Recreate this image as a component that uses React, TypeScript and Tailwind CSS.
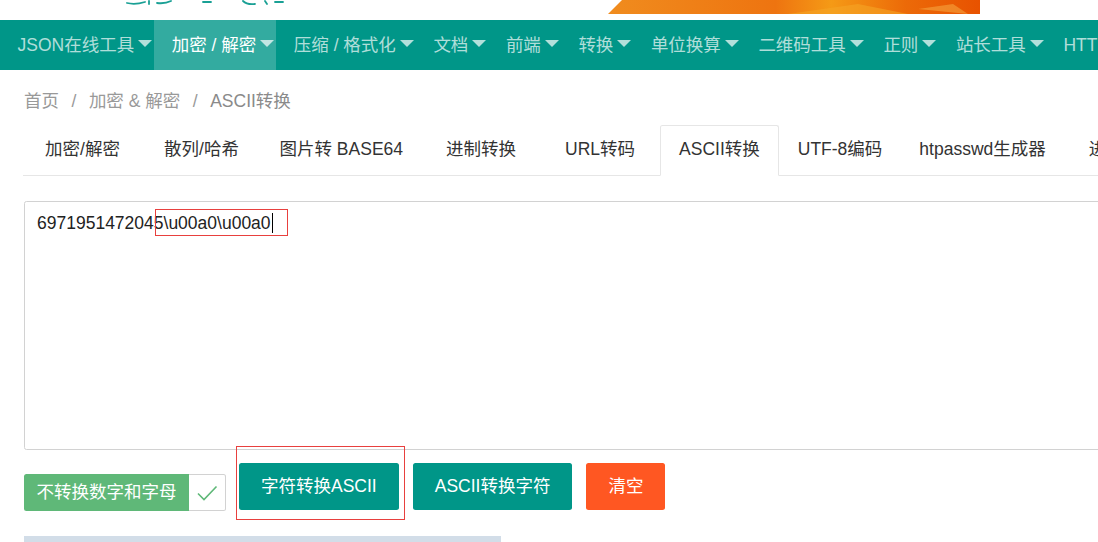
import React from "react";

const navItems = [
  "JSON在线工具",
  "加密 / 解密",
  "压缩 / 格式化",
  "文档",
  "前端",
  "转换",
  "单位换算",
  "二维码工具",
  "正则",
  "站长工具",
  "HTTP工具",
];

const tabs = [
  "加密/解密",
  "散列/哈希",
  "图片转 BASE64",
  "进制转换",
  "URL转码",
  "ASCII转换",
  "UTF-8编码",
  "htpasswd生成器",
  "进制转换",
];

function Caret() {
  return (
    <span className="ml-[4px] h-0 w-0 -mt-[3px] border-x-[7.5px] border-t-[7.5px] border-b-0 border-x-transparent border-t-[rgba(255,255,255,0.7)]" />
  );
}

export default function App() {
  return (
    <div
      className="w-[1098px] h-[542px] overflow-hidden bg-white text-[17.5px] text-[#333]"
      style={{ fontFamily: '"Liberation Sans", "Noto Sans CJK SC", sans-serif' }}
    >
      {/* header strip: bottom of logo + banner */}
      <div className="flex h-[20px] overflow-hidden">
        <svg width="180" height="20" viewBox="0 0 180 20" className="ml-[115px] shrink-0" fill="none">
          <g stroke="#1aa095" strokeWidth="1.8" strokeLinecap="round">
            <path d="M12 3 Q20 5 30 2" />
            <path d="M34 1 L34 4" />
            <path d="M42 3 Q50 4 56 1" />
            <path d="M88 2 L96 2" />
            <path d="M128 1 Q132 5 140 4" />
            <path d="M150 1 L152 4" />
            <path d="M160 2 L168 2" />
          </g>
        </svg>
        <svg width="372" height="14" viewBox="0 0 372 14" className="ml-[313px] shrink-0">
          <defs>
            <linearGradient id="bn" x1="0" x2="1" y1="0" y2="0">
              <stop offset="0" stopColor="#f08c1e" />
              <stop offset="0.45" stopColor="#ee7410" />
              <stop offset="0.6" stopColor="#f59a16" />
              <stop offset="0.8" stopColor="#ec6a08" />
              <stop offset="1" stopColor="#e85200" />
            </linearGradient>
          </defs>
          <polygon points="14,0 372,0 372,14 0,14" fill="url(#bn)" />
          <polygon points="180,14 250,4 300,14" fill="#f5a524" opacity="0.6" />
          <polygon points="310,9 345,4 360,14" fill="#f7b24a" opacity="0.5" />
        </svg>
      </div>

      {/* main nav */}
      <nav className="flex h-[50px] items-stretch overflow-hidden whitespace-nowrap bg-[#009688]">
        {navItems.map((item, i) => (
          <div
            key={item}
            className={`flex shrink-0 items-center pl-[17.5px] pr-[2px] ${
              i === 1 ? "bg-[#33aba0] text-white" : "text-[rgba(255,255,255,0.7)]"
            }`}
          >
            <span className="leading-[20px]">{item}</span>
            <Caret />
          </div>
        ))}
      </nav>

      <div className="pl-6">
        {/* breadcrumb */}
        <div className="pt-[21px] leading-[20px] text-[#999]">
          <span>首页</span>
          <span className="mx-[12.5px]">/</span>
          <span>加密 &amp; 解密</span>
          <span className="mx-[12.5px]">/</span>
          <span className="text-[#8a8a8a]">ASCII转换</span>
        </div>

        {/* tabs */}
        <ul className="-ml-px mt-[14px] flex h-[51px] w-[1200px] border-b border-[#e6e6e6] whitespace-nowrap">
          {tabs.map((t, i) => (
            <li
              key={i}
              className={`flex h-[51px] min-w-[119px] shrink-0 items-center justify-center px-[18.5px] pb-[3px] leading-[20px] ${
                i === 5 ? "rounded-t-[2.5px] border border-[#e6e6e6] border-b-white" : ""
              }`}
            >
              {t}
            </li>
          ))}
        </ul>

        {/* input area */}
        <div className="relative mt-[25px] h-[249px] w-[1120px] rounded-[2.5px] border border-[#d2d2d2] pl-[12px] pt-[7px] leading-[25px] text-[#222]">
          <span>6971951472045\u00a0\u00a0</span>
          <span className="ml-px inline-block h-[20px] w-px translate-y-[4px] bg-black" />
          <div className="absolute left-[130px] top-[7px] h-[27px] w-[133px] border border-[#e8403e]" />
        </div>

        {/* actions */}
        <div className="mt-[13px] flex items-end">
          <div className="-mb-px flex h-[37px]">
            <span className="flex items-center rounded-l-[2.5px] bg-[#5fb878] px-[12.5px] text-white">
              不转换数字和字母
            </span>
            <span className="flex w-[37px] items-center justify-center rounded-r-[2.5px] border border-l-0 border-[#d2d2d2]">
              <svg width="22" height="18" viewBox="0 0 22 18" fill="none">
                <path d="M2 9.5 L8 15.5 L20.5 2.5" stroke="#5fb878" strokeWidth="1.6" />
              </svg>
            </span>
          </div>
          <div className="relative ml-[13px]">
            <button className="h-[47px] rounded-[2.5px] bg-[#009688] px-[22px] text-white">
              字符转换ASCII
            </button>
            <div className="absolute -left-[3px] -top-[17px] h-[74px] w-[169px] border border-[#e8403e]" />
          </div>
          <button className="ml-[14px] h-[47px] rounded-[2.5px] bg-[#009688] px-[22px] text-white">
            ASCII转换字符
          </button>
          <button className="ml-[14px] h-[47px] rounded-[2.5px] bg-[#ff5722] px-[22px] text-white">
            清空
          </button>
        </div>

        <div className="mt-[26px] h-[10px] w-[477px] bg-[#d2dde8]" />
      </div>
    </div>
  );
}
